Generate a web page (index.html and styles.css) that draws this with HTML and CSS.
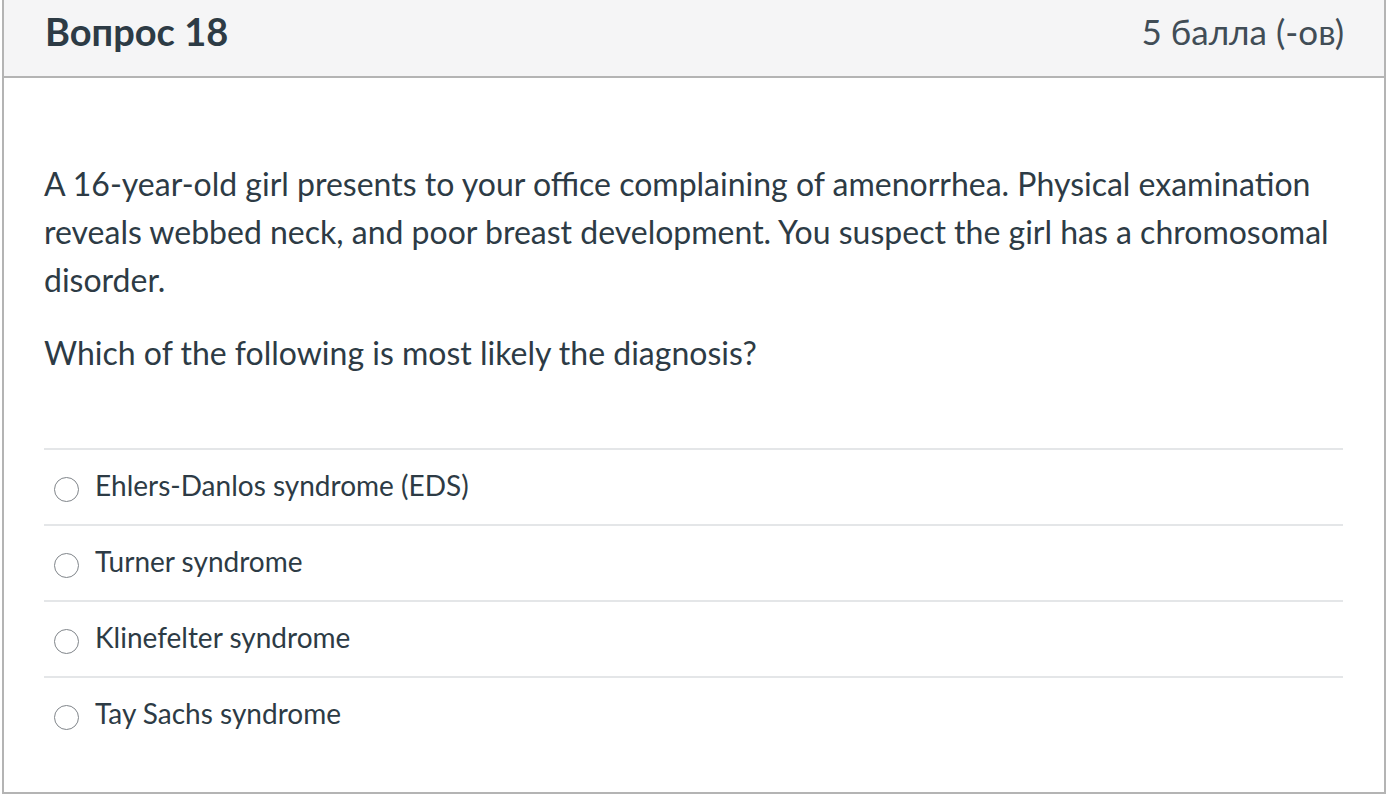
FILE: index.html
```html
<!DOCTYPE html>
<html lang="ru">
<head>
<meta charset="utf-8">
<link rel="stylesheet" href="styles.css">
<title>Вопрос 18</title>
</head>
<body>
<div class="question">
  <div class="header">
    <h2 class="title">Вопрос 18</h2>
    <span class="points">5 балла (-ов)</span>
  </div>
  <div class="content">
    <div class="text">
      <p>A 16-year-old girl presents to your office complaining of amenorrhea. Physical examination reveals webbed neck, and poor breast development. You suspect the girl has a chromosomal disorder.</p>
      <p>Which of the following is most likely the diagnosis?</p>
    </div>
    <div class="answers">
      <label class="answer"><span class="radio"></span><span class="label">Ehlers-Danlos syndrome (EDS)</span></label>
      <label class="answer"><span class="radio"></span><span class="label">Turner syndrome</span></label>
      <label class="answer"><span class="radio"></span><span class="label">Klinefelter syndrome</span></label>
      <label class="answer"><span class="radio"></span><span class="label">Tay Sachs syndrome</span></label>
    </div>
  </div>
</div>
</body>
</html>
```
FILE: styles.css
```css
html, body {
  margin: 0;
  padding: 0;
  background: #ffffff;
}
body {
  font-family: Lato, "Open Sans", "Liberation Sans", sans-serif;
  color: #2d3b45;
}
.question {
  margin-left: 2px;
  width: 1380px;
  height: 792px;
  border: 2px solid #b4b4b4;
  border-top: none;
  box-sizing: content-box;
}
.header {
  display: flex;
  justify-content: space-between;
  align-items: center;
  height: 78px;
  padding: 0 40px 15px 41px;
  background: #f5f5f6;
  border-bottom: 2px solid #b4b4b4;
  box-sizing: border-box;
}
.title {
  margin: 0;
  font-size: 38px;
  font-weight: 700;
}
.points {
  font-size: 35px;
  color: #414d56;
}
.content {
  padding: 82px 41px 0 40px;
}
.text p {
  margin: 0 0 25px 0;
  font-size: 32px;
  line-height: 48px;
}
.text p:last-child {
  margin-bottom: 0;
}
.answers {
  margin-top: 71px;
}
.answer {
  display: flex;
  align-items: center;
  height: 76px;
  border-top: 2px solid #e4e6e8;
  box-sizing: border-box;
  padding: 0 0 4px 10px;
}
.radio {
  flex: none;
  width: 25px;
  height: 25px;
  margin-top: 8px;
  border: 1.5px solid #80858a;
  border-radius: 50%;
  box-sizing: border-box;
}
.label {
  margin-left: 16px;
  font-size: 28px;
}
```
